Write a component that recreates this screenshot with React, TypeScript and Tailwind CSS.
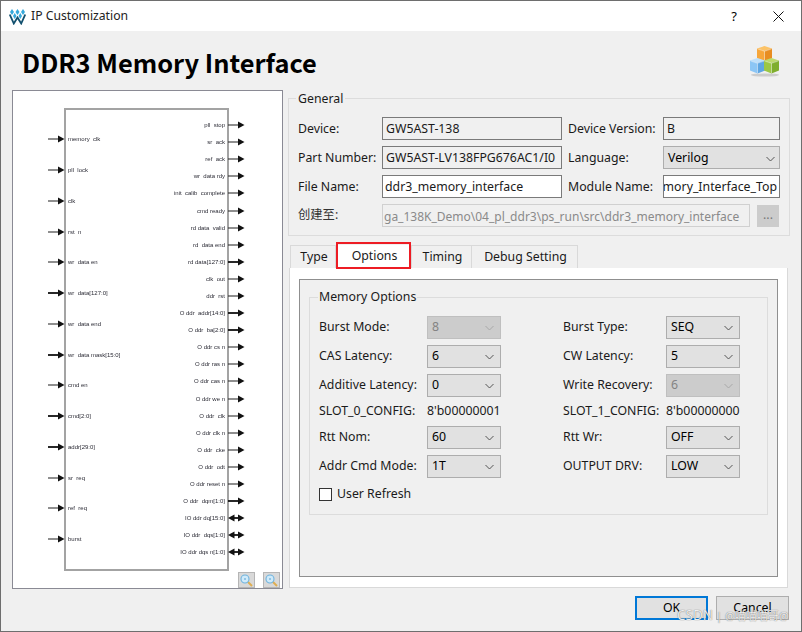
import React from "react";

const leftPins: [string, boolean][] = [
  ["memory  clk", false], ["pll  lock", false], ["clk", false], ["rst  n", false], ["wr  data en", false],
  ["wr  data[127:0]", true], ["wr  data end", false], ["wr  data mask[15:0]", true], ["cmd en", false],
  ["cmd[2:0]", true], ["addr[29:0]", true], ["sr  req", false], ["ref  req", false], ["burst", false],
];
const rightPins: [string, number][] = [
  ["pll  stop", 1], ["sr  ack", 1], ["ref  ack", 1], ["wr  data rdy", 1], ["init  calib  complete", 1], ["cmd ready", 1],
  ["rd data  valid", 1], ["rd  data end", 1], ["rd data[127:0]", 2], ["clk  out", 1], ["ddr  rst", 1],
  ["O ddr  addr[14:0]", 2], ["O ddr  ba[2:0]", 2], ["O ddr cs n", 1], ["O ddr ras n", 1], ["O ddr cas n", 1],
  ["O ddr we n", 1], ["O ddr  clk", 1], ["O ddr clk n", 1], ["O ddr  cke", 1], ["O ddr  odt", 1], ["O ddr reset n", 1],
  ["O ddr  dqm[1:0]", 2], ["IO ddr dq[15:0]", 3], ["IO ddr  dqs[1:0]", 3], ["IO ddr dqs n[1:0]", 3],
];

function Arrow({ thick, both }: { thick?: boolean; both?: boolean }) {
  return (
    <svg width="17" height="8" viewBox="0 0 17 8" className="shrink-0">
      <line x1={both ? 4 : 0} y1="4" x2="11" y2="4" stroke={thick ? "#111" : "#333"} strokeWidth={thick ? 1.8 : 1.1} />
      <polygon points="10,0.5 16.5,4 10,7.5" fill="#111" />
      {both && <polygon points="6.5,0.5 0,4 6.5,7.5" fill="#111" />}
    </svg>
  );
}

function Chevron({ light }: { light?: boolean }) {
  return (
    <svg width="9" height="6" viewBox="0 0 9 6" className="shrink-0">
      <path d="M0.5 1 L4.5 5 L8.5 1" fill="none" stroke={light ? "#a8a8a8" : "#555"} strokeWidth="1" />
    </svg>
  );
}

function Combo({ value, disabled, wide }: { value: string; disabled?: boolean; wide?: boolean }) {
  return (
    <div
      className={
        "flex h-[23px] shrink-0 items-center justify-between border pl-[4px] " +
        (wide ? "w-[117px] pr-[4px] " : "w-[74px] pr-[6px] ") +
        (disabled ? "border-[#bfbfbf] bg-[#cccccc] text-[#838383]" : "border-[#adadad] bg-[#e1e1e1] text-black")
      }
    >
      <span>{value}</span>
      <Chevron light={disabled} />
    </div>
  );
}

function Field({ value, width, white, end }: { value: string; width: string; white?: boolean; end?: boolean }) {
  return (
    <div
      className={
        "flex h-[23px] shrink-0 items-center overflow-hidden whitespace-nowrap border border-[#7a7a7a] " +
        width + " " + (white ? "bg-white px-[2px] " : "bg-[#f0f0f0] px-[3px] ") + (end ? "justify-end" : "")
      }
    >
      {value}
    </div>
  );
}

function OptRow({ l, lv, ld, r, rv, rd }: { l: string; lv: string; ld?: boolean; r: string; rv: string; rd?: boolean }) {
  return (
    <div className="flex h-[23px] items-center">
      <span className="w-[108px] shrink-0 whitespace-nowrap">{l}</span>
      <Combo value={lv} disabled={ld} />
      <span className="ml-[62px] w-[103px] shrink-0 whitespace-nowrap">{r}</span>
      <Combo value={rv} disabled={rd} />
    </div>
  );
}

function Magnifier() {
  return (
    <div className="flex h-[16px] w-[17px] items-center justify-center border border-[#b5b5b5] bg-[#d9d9d9]">
      <svg width="13" height="13" viewBox="0 0 13 13">
        <line x1="7.5" y1="7.5" x2="12" y2="12" stroke="#dfae52" strokeWidth="2" />
        <circle cx="5" cy="5" r="4" fill="#cfeafa" stroke="#6fb3de" strokeWidth="1.1" />
        <circle cx="5" cy="5" r="1" fill="#7fb8dc" />
      </svg>
    </div>
  );
}

function Cube({ x, y, top, left, right }: { x: number; y: number; top: string; left: string; right: string }) {
  return (
    <g transform={`translate(${x} ${y})`}>
      <polygon points="7.5,0 15,2.5 7.5,5 0,2.5" fill={top} />
      <polygon points="0,2.5 7.5,5 7.5,15.5 0,12.5" fill={left} />
      <polygon points="15,2.5 7.5,5 7.5,15.5 15,12.5" fill={right} />
      <path d="M0.5 3 L7.5 5.3 L14.5 3 M7.5 5.3 V15" fill="none" stroke="#ffffff" strokeOpacity="0.6" strokeWidth="0.6" />
    </g>
  );
}

export default function App() {
  return (
    <div className="relative flex h-[632px] w-[802px] flex-col overflow-hidden border border-[#6e6e6e] bg-[#f0f0f0] font-['Noto_Sans','Noto_Sans_CJK_SC',sans-serif] text-[12.3px] leading-none text-[#1a1a1a]">
      {/* title bar */}
      <div className="flex h-[30px] shrink-0 items-center bg-white pl-[8px] pr-[17px]">
        <svg width="17" height="17" viewBox="0 0 17 17" className="shrink-0">
          <g fill="#35a9dc">
            <polygon points="3,1 5,4 3,7 1,4" />
            <polygon points="8.5,1 10.5,4 8.5,7 6.5,4" />
            <polygon points="14,1 16,4 14,7 12,4" />
            <polygon points="5.7,5 7.5,8 5.7,11 4,8" />
            <polygon points="11.3,5 13,8 11.3,11 9.5,8" />
          </g>
          <path d="M0.8 6.5 L4.8 15.5 L8.5 9.5 L12.2 15.5 L16.2 6.5" fill="none" stroke="#12506e" strokeWidth="1.8" />
        </svg>
        <span className="ml-[5px] text-[12.2px] text-[#222]">IP Customization</span>
        <span className="ml-auto text-[13px] text-black">?</span>
        <svg width="11" height="11" viewBox="0 0 11 11" className="ml-[36px] shrink-0">
          <path d="M0.5 0.5 L10.5 10.5 M10.5 0.5 L0.5 10.5" stroke="#111" strokeWidth="1" />
        </svg>
      </div>

      {/* header */}
      <div className="flex h-[59px] shrink-0 items-center justify-between pl-[21px] pr-[21px]">
        <span className="mt-[5px] font-['Noto_Sans_CJK_SC',sans-serif] text-[25.4px] font-bold text-black">DDR3 Memory Interface</span>
        <svg width="31" height="33" viewBox="0 0 31 33" className="mt-[2px]">
          <ellipse cx="16" cy="30" rx="14" ry="1.6" fill="#000" opacity="0.15" />
          <Cube x={8} y={1} top="#fcc368" left="#f7a63a" right="#e88d22" />
          <Cube x={1} y={13} top="#bfe0fa" left="#8cc6f5" right="#5fa6e2" />
          <Cube x={15} y={13} top="#bcd96c" left="#9cc744" right="#7fae2e" />
        </svg>
      </div>

      {/* main */}
      <div className="flex shrink-0 pl-[11px]">
        {/* diagram */}
        <div className="flex h-[499px] w-[271px] shrink-0 flex-col border border-[#8a8a94] bg-white pl-[51px] pt-[17px] font-['Liberation_Sans',sans-serif] text-[6px] text-[#2c2c36]">
          <div className="flex h-[463px] w-[165px] shrink-0 justify-between border-2 border-[#a3a3a3]">
            <div className="flex flex-col pt-[14px]">
              {leftPins.map(([n, t]) => (
                <div key={n} className="flex h-[30.75px] items-center">
                  <span className="-ml-[18px]"><Arrow thick={t} /></span>
                  <span className="ml-[3px] whitespace-pre blur-[0.25px]">{n}</span>
                </div>
              ))}
            </div>
            <div className="flex flex-col items-end pt-[6.5px]">
              {rightPins.map(([n, k]) => (
                <div key={n} className="flex h-[17.1px] items-center">
                  <span className="mr-[3px] whitespace-pre blur-[0.25px]">{n}</span>
                  <span className="-mr-[18px]"><Arrow thick={k > 1} both={k === 3} /></span>
                </div>
              ))}
            </div>
          </div>
          <div className="flex justify-end gap-[8px] pt-[1px] pr-[2px]">
            <Magnifier />
            <Magnifier />
          </div>
        </div>

        {/* right column */}
        <div className="ml-[5px] flex w-[502px] shrink-0 flex-col pt-[8px]">
          {/* General */}
          <div className="flex h-[138px] flex-col border border-[#dcdcdc] pl-[9px]">
            <span className="-mt-[6px] -ml-[2px] h-[16px] self-start bg-[#f0f0f0] px-[2px]">General</span>
            <div className="mt-[8px] flex flex-col gap-[6px]">
              <div className="flex items-center [&>*]:pt-[2px]">
                <span className="w-[84px] shrink-0">Device:</span>
                <Field value="GW5AST-138" width="w-[180px]" />
                <span className="ml-[6px] w-[95px] shrink-0">Device Version:</span>
                <Field value="B" width="w-[117px]" />
              </div>
              <div className="flex items-center [&>*]:pt-[2px]">
                <span className="w-[84px] shrink-0">Part Number:</span>
                <Field value="GW5AST-LV138FPG676AC1/I0" width="w-[180px]" />
                <span className="ml-[6px] w-[95px] shrink-0">Language:</span>
                <Combo value="Verilog" wide />
              </div>
              <div className="flex items-center [&>*]:pt-[2px]">
                <span className="w-[84px] shrink-0">File Name:</span>
                <Field value="ddr3_memory_interface" width="w-[180px]" white />
                <span className="ml-[6px] w-[95px] shrink-0">Module Name:</span>
                <Field value="DDR3_Memory_Interface_Top" width="w-[117px]" white end />
              </div>
              <div className="flex items-center">
                <span className="w-[84px] shrink-0 text-[#333]">创建至:</span>
                <div className="flex h-[23px] w-[368px] shrink-0 items-center overflow-hidden whitespace-nowrap border border-[#d0d0d0] pl-[1px] pt-[2px] text-[12px] text-[#8a8a8a]">
                  ga_138K_Demo\04_pl_ddr3\ps_run\src\ddr3_memory_interface
                </div>
                <div className="ml-[7px] flex h-[22px] w-[22px] shrink-0 items-center justify-center border border-[#cccccc] bg-[#cccccc] text-[#777]">...</div>
              </div>
            </div>
          </div>

          {/* tabs */}
          <div className="relative ml-[2px] mt-[9px] flex h-[23px] shrink-0 items-stretch">
            <div className="flex w-[46px] items-center justify-center border border-b-0 border-[#d9d9d9] pl-[2px]">Type</div>
            <div className="flex w-[75px] items-center justify-center bg-white pb-[1px] pl-[2px]">Options</div>
            <div className="flex w-[61px] items-center justify-center border border-b-0 border-[#d9d9d9] pl-[2px]">Timing</div>
            <div className="flex w-[106px] items-center justify-center border border-b-0 border-l-0 border-[#d9d9d9] pl-[2px]">Debug Setting</div>
            <div className="absolute left-[46px] -top-[3px] h-[27px] w-[75px] border-2 border-[#ed1c24]" />
          </div>

          {/* pane */}
          <div className="ml-[1px] flex h-[320px] w-[499px] flex-col border border-t-0 border-[#d9d9d9] bg-white px-[9px] pt-[11px]">
            <div className="flex h-[298px] flex-col border border-[#8f8f8f] bg-[#f0f0f0] px-[9px] pt-[17px]">
              <div className="flex h-[218px] flex-col border border-[#dcdcdc] pl-[9px]">
                <span className="-mt-[7px] -ml-[1px] h-[16px] self-start bg-[#f0f0f0] px-[1px]">Memory Options</span>
                <div className="mt-[9px] flex flex-col gap-[6px]">
                  <OptRow l="Burst Mode:" lv="8" ld r="Burst Type:" rv="SEQ" />
                  <OptRow l="CAS Latency:" lv="6" r="CW Latency:" rv="5" />
                  <OptRow l="Additive Latency:" lv="0" r="Write Recovery:" rv="6" rd />
                  <div className="flex h-[17px] items-center whitespace-nowrap">
                    <span className="w-[108px] shrink-0">SLOT_0_CONFIG:</span>
                    <span className="w-[74px] shrink-0">8'b00000001</span>
                    <span className="ml-[62px] w-[103px] shrink-0">SLOT_1_CONFIG:</span>
                    <span>8'b00000000</span>
                  </div>
                  <OptRow l="Rtt Nom:" lv="60" r="Rtt Wr:" rv="OFF" />
                  <OptRow l="Addr Cmd Mode:" lv="1T" r="OUTPUT DRV:" rv="LOW" />
                  <div className="mt-[4px] flex h-[13px] items-center">
                    <span className="h-[13px] w-[13px] shrink-0 border border-[#333] bg-white" />
                    <span className="ml-[5px]">User Refresh</span>
                  </div>
                </div>
              </div>
            </div>
          </div>
        </div>
      </div>

      {/* footer */}
      <div className="flex justify-end gap-[8px] pr-[12px] pt-[7px]">
        <div className="flex h-[24px] w-[73px] items-center justify-center border-2 border-[#0078d7] bg-[#e1e1e1] text-black">OK</div>
        <div className="flex h-[24px] w-[73px] items-center justify-center border border-[#adadad] bg-[#e1e1e1] text-black">Cancel</div>
      </div>

      {/* watermark */}
      <div className="absolute left-[676px] top-[608px] flex items-center gap-[3px] whitespace-nowrap text-white/90 [text-shadow:0_0_1px_#444]">
        <span className="text-[13.5px]">CSDN</span>
        <span className="text-[11px]">| @喵喵喵哥@</span>
      </div>
    </div>
  );
}
